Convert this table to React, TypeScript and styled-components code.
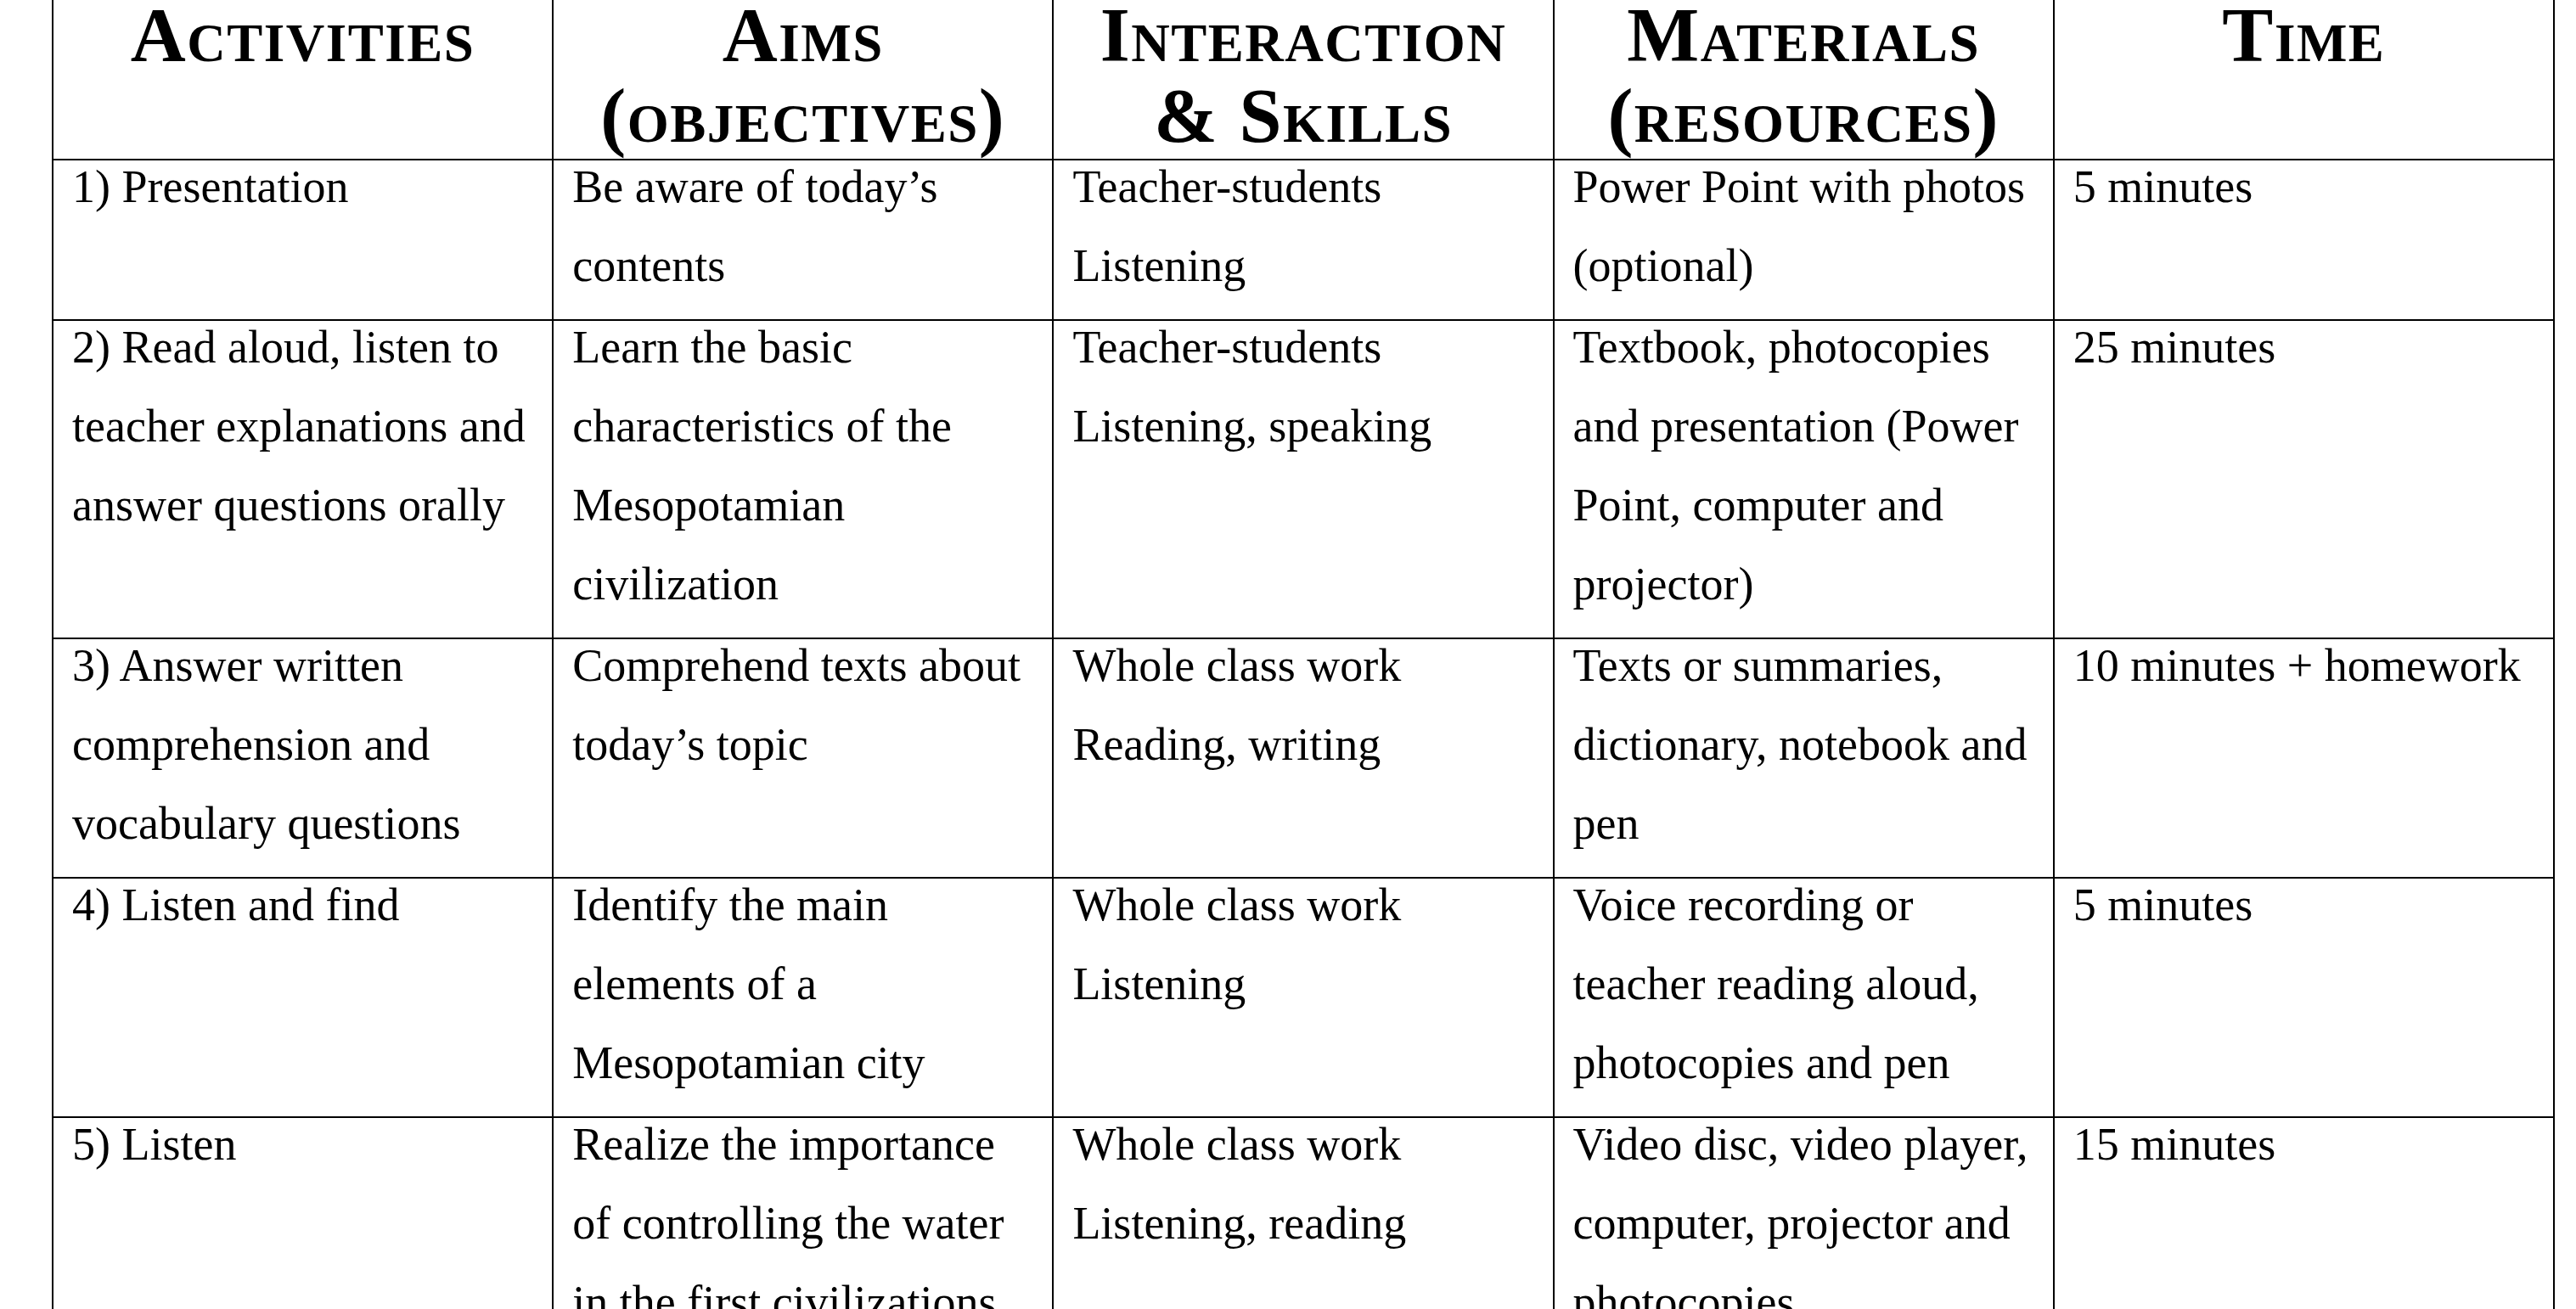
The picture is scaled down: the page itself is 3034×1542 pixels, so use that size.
import styled, { createGlobalStyle } from "styled-components";

const GlobalStyle = createGlobalStyle`
    html, body {
        margin: 0;
        padding: 0;
        background: #ffffff;
    }
    body {
        font-family: "Liberation Serif", "Times New Roman", serif;
        color: #000000;
        overflow: hidden;
    }
`;

const Page = styled.div`
    padding-left: 61px;
    margin-top: -2px;
`;

const PlanTable = styled.table`
    border-collapse: collapse;
    table-layout: fixed;
    width: 2948px;
`;

const HeadCell = styled.th`
    border: 2px solid #000;
    padding: 0 10px 3px;
    vertical-align: top;
    text-align: center;
    font-size: 90px;
    font-weight: 700;
    font-variant: small-caps;
    letter-spacing: 1.5px;
    line-height: 95px;
`;

const HeadText = styled.div`
    margin-top: -6px;
`;

const Cell = styled.td`
    border: 2px solid #000;
    padding: 0 22px 16px;
    vertical-align: top;
    text-align: left;
    font-size: 54px;
    line-height: 93px;
`;

const CellText = styled.div`
    margin-top: -15px;
`;

type Row = {
    activity: string;
    aim: string;
    interaction: string[];
    materials: string;
    time: string;
};

const headers = [
    "Activities",
    "Aims (objectives)",
    "Interaction & Skills",
    "Materials (resources)",
    "Time",
];

const rows: Row[] = [
    {
        activity: "1) Presentation",
        aim: "Be aware of today’s contents",
        interaction: ["Teacher-students", "Listening"],
        materials: "Power Point with photos (optional)",
        time: "5 minutes",
    },
    {
        activity:
            "2) Read aloud, listen to teacher explanations and answer questions orally",
        aim: "Learn the basic characteristics of the Mesopotamian civilization",
        interaction: ["Teacher-students", "Listening, speaking"],
        materials:
            "Textbook, photocopies and presentation (Power Point, computer and projector)",
        time: "25 minutes",
    },
    {
        activity:
            "3) Answer written comprehension and vocabulary questions",
        aim: "Comprehend texts about today’s topic",
        interaction: ["Whole class work", "Reading, writing"],
        materials: "Texts or summaries, dictionary, notebook and pen",
        time: "10 minutes + homework",
    },
    {
        activity: "4) Listen and find",
        aim: "Identify the main elements of a Mesopotamian city",
        interaction: ["Whole class work", "Listening"],
        materials:
            "Voice recording or teacher reading aloud, photocopies and pen",
        time: "5 minutes",
    },
    {
        activity: "5) Listen",
        aim: "Realize the importance of controlling the water in the first civilizations",
        interaction: ["Whole class work", "Listening, reading"],
        materials:
            "Video disc, video player, computer, projector and photocopies",
        time: "15 minutes",
    },
];

function App() {
    return (
        <>
            <GlobalStyle />
            <Page>
                <PlanTable>
                    <colgroup>
                        {headers.map((h) => (
                            <col key={h} style={{ width: "20%" }} />
                        ))}
                    </colgroup>
                    <thead>
                        <tr>
                            {headers.map((h) => (
                                <HeadCell key={h}>
                                    <HeadText>{h}</HeadText>
                                </HeadCell>
                            ))}
                        </tr>
                    </thead>
                    <tbody>
                        {rows.map((r) => (
                            <tr key={r.activity}>
                                <Cell>
                                    <CellText>{r.activity}</CellText>
                                </Cell>
                                <Cell>
                                    <CellText>{r.aim}</CellText>
                                </Cell>
                                <Cell>
                                    <CellText>
                                        {r.interaction.map((line) => (
                                            <div key={line}>{line}</div>
                                        ))}
                                    </CellText>
                                </Cell>
                                <Cell>
                                    <CellText>{r.materials}</CellText>
                                </Cell>
                                <Cell>
                                    <CellText>{r.time}</CellText>
                                </Cell>
                            </tr>
                        ))}
                    </tbody>
                </PlanTable>
            </Page>
        </>
    );
}

export default App;
